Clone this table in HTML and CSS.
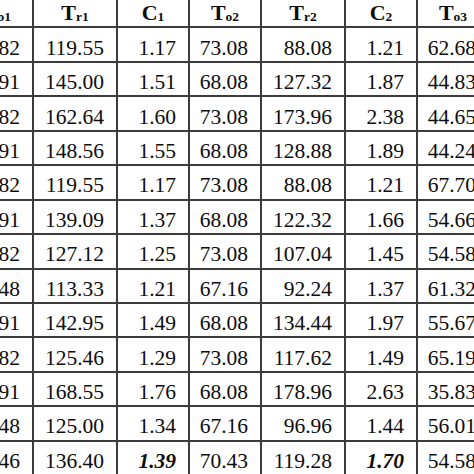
FILE: index.html
```html
<!DOCTYPE html>
<html>
<head>
<meta charset="utf-8">
<link rel="stylesheet" href="styles.css">
</head>
<body>
<table class="data">
<colgroup>
<col class="w72"><col class="w84"><col class="w72"><col class="w72"><col class="w84"><col class="w72"><col class="w72">
</colgroup>
<thead>
<tr>
<th>T<sub>o1</sub></th><th>T<sub>r1</sub></th><th>C<sub>1</sub></th><th>T<sub>o2</sub></th><th>T<sub>r2</sub></th><th>C<sub>2</sub></th><th>T<sub>o3</sub></th>
</tr>
</thead>
<tbody>
<tr><td>55.82</td><td>119.55</td><td>1.17</td><td>73.08</td><td>88.08</td><td>1.21</td><td>62.68</td></tr>
<tr><td>55.91</td><td>145.00</td><td>1.51</td><td>68.08</td><td>127.32</td><td>1.87</td><td>44.83</td></tr>
<tr><td>55.82</td><td>162.64</td><td>1.60</td><td>73.08</td><td>173.96</td><td>2.38</td><td>44.65</td></tr>
<tr><td>55.91</td><td>148.56</td><td>1.55</td><td>68.08</td><td>128.88</td><td>1.89</td><td>44.24</td></tr>
<tr><td>55.82</td><td>119.55</td><td>1.17</td><td>73.08</td><td>88.08</td><td>1.21</td><td>67.70</td></tr>
<tr><td>55.91</td><td>139.09</td><td>1.37</td><td>68.08</td><td>122.32</td><td>1.66</td><td>54.66</td></tr>
<tr><td>55.82</td><td>127.12</td><td>1.25</td><td>73.08</td><td>107.04</td><td>1.45</td><td>54.58</td></tr>
<tr><td>55.48</td><td>113.33</td><td>1.21</td><td>67.16</td><td>92.24</td><td>1.37</td><td>61.32</td></tr>
<tr><td>55.91</td><td>142.95</td><td>1.49</td><td>68.08</td><td>134.44</td><td>1.97</td><td>55.67</td></tr>
<tr><td>55.82</td><td>125.46</td><td>1.29</td><td>73.08</td><td>117.62</td><td>1.49</td><td>65.19</td></tr>
<tr><td>55.91</td><td>168.55</td><td>1.76</td><td>68.08</td><td>178.96</td><td>2.63</td><td>35.83</td></tr>
<tr><td>55.48</td><td>125.00</td><td>1.34</td><td>67.16</td><td>96.96</td><td>1.44</td><td>56.01</td></tr>
<tr><td>55.46</td><td>136.40</td><td class="bi">1.39</td><td>70.43</td><td>119.28</td><td class="bi">1.70</td><td>54.58</td></tr>
</tbody>
</table>
</body>
</html>
```

FILE: styles.css
```css
html, body {
  margin: 0;
  padding: 0;
  background: #ffffff;
  overflow: hidden;
  width: 474px;
  height: 474px;
}

.data {
  font-family: "Liberation Serif", "Times New Roman", serif;
  font-size: 21.5px;
  line-height: 22px;
  color: #0d0d0d;
  border-collapse: collapse;
  table-layout: fixed;
  width: 528px;
  margin-left: -40px;
  margin-top: -8px;
}

.w72 { width: 72px; }
.w84 { width: 84px; }

.data tr {
  height: 34.45px;
}

.data th,
.data td {
  border: 2px solid #3c3c3c;
  padding: 0;
  white-space: nowrap;
  overflow: hidden;
}

.data th {
  font-weight: bold;
  font-size: 22px;
  text-align: center;
  padding-top: 5px;
}

.data th sub {
  font-size: 13.5px;
  line-height: 0;
  vertical-align: baseline;
  position: relative;
  top: 1px;
}

.data td {
  text-align: right;
  padding-right: 12px;
  padding-top: 6px;
}

.data td.bi {
  font-weight: bold;
  font-style: italic;
}
```
